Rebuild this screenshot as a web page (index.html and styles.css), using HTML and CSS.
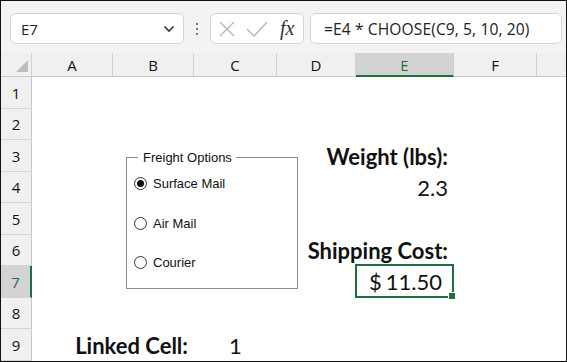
FILE: index.html
```html
<!DOCTYPE html>
<html>
<head>
<meta charset="utf-8">
<link rel="stylesheet" href="styles.css">
</head>
<body>
<div class="app">
  <div class="toolbar">
    <div class="namebox">
      <span class="nb-text">E7</span>
      <svg class="chev" width="12" height="8" viewBox="0 0 12 8"><path d="M1.5 1.5 L6 6 L10.5 1.5" fill="none" stroke="#333" stroke-width="1.6"/></svg>
    </div>
    <div class="dots"><i></i><i></i><i></i></div>
    <div class="fxbox">
      <svg class="xicon" width="16" height="16" viewBox="0 0 16 16"><path d="M1 1 L15 15 M15 1 L1 15" stroke="#b4b4b4" stroke-width="1.3" fill="none"/></svg>
      <svg class="check" width="22" height="16" viewBox="0 0 22 16"><path d="M1 8 L8 15 L21 1" stroke="#b4b4b4" stroke-width="1.3" fill="none"/></svg>
      <span class="fx">fx</span>
    </div>
    <div class="formula">=E4 * CHOOSE(C9, 5, 10, 20)</div>
  </div>
  <div class="sheet">
    <div class="corner"><svg width="12" height="12" viewBox="0 0 12 12"><path d="M12 0 L12 12 L0 12 Z" fill="#bdbdbd"/></svg></div>
    <div class="ch">A</div><div class="ch">B</div><div class="ch">C</div><div class="ch">D</div><div class="ch sel">E</div><div class="ch">F</div><div class="ch last"></div>

    <div class="rh">1</div><div class="row-fill"></div>
    <div class="rh">2</div><div class="row-fill"></div>
    <div class="rh">3</div><div class="c span-ab"></div><div class="c"></div><div class="c lbl r3">Weight (lbs):</div><div class="c rest"></div>
    <div class="rh">4</div><div class="c span-ab"></div><div class="c"></div><div class="c val">2.3</div><div class="c rest"></div>
    <div class="rh">5</div><div class="row-fill"></div>
    <div class="rh">6</div><div class="c span-ab"></div><div class="c"></div><div class="c lbl">Shipping Cost:</div><div class="c rest"></div>
    <div class="rh sel">7</div><div class="c span-ab"></div><div class="c"></div><div class="c active"><span>$</span><span>11.50</span><i class="handle"></i></div><div class="c rest"></div>
    <div class="rh">8</div><div class="row-fill"></div>
    <div class="rh">9</div><div class="c lbl9">Linked Cell:</div><div class="c one">1</div><div class="c rest2"></div>
  </div>

  <fieldset class="group">
    <legend>Freight Options</legend>
    <label class="opt"><span class="radio on"></span>Surface Mail</label>
    <label class="opt"><span class="radio"></span>Air Mail</label>
    <label class="opt"><span class="radio"></span>Courier</label>
  </fieldset>
</div>
</body>
</html>
```

FILE: styles.css
```css
* { box-sizing: border-box; }
html, body { margin: 0; padding: 0; background: #fff; }
.app {
  position: relative;
  width: 567px;
  height: 362px;
  border: 1px solid #111;
  overflow: hidden;
  background: #fff;
  font-family: "Open Sans", "Noto Sans", sans-serif;
}
.toolbar {
  height: 52px;
  background: #f3f3f3;
  display: flex;
  align-items: flex-start;
  padding: 12px 0 0 9px;
}
.namebox {
  width: 174px;
  height: 31px;
  background: #fff;
  border: 1px solid #d6d6d6;
  border-radius: 6px;
  display: flex;
  align-items: center;
  justify-content: space-between;
  padding: 0 8px 0 10px;
  font-size: 15px;
  color: #222;
}
.dots {
  width: 26px;
  height: 31px;
  display: flex;
  flex-direction: column;
  align-items: center;
  justify-content: center;
  gap: 3px;
}
.dots i { display: block; width: 2px; height: 2px; background: #777; }
.fxbox {
  width: 94px;
  height: 31px;
  background: #fff;
  border: 1px solid #d6d6d6;
  border-radius: 6px;
  display: flex;
  align-items: center;
  padding: 0 6px 0 8px;
  gap: 11px;
}
.fx {
  font-family: "Liberation Serif", serif;
  font-style: italic;
  font-size: 20px;
  color: #333;
  margin-left: 1px;
}
.formula {
  margin-left: 6px;
  width: 252px;
  height: 31px;
  background: #fff;
  border: 1px solid #d6d6d6;
  border-radius: 6px;
  padding: 0 0 0 13px;
  display: flex;
  align-items: center;
  font-size: 15.6px;
  letter-spacing: 0.1px;
  color: #222;
  white-space: nowrap;
}
.sheet {
  display: grid;
  grid-template-columns: 31px 81px 81px 83px 79px 98px 83px 1fr;
  grid-template-rows: 24px 32px 31px 32px 31px 32px 31px 32px 31px 32px;
  font-family: "Lato", "Open Sans", sans-serif;
}
.corner {
  background: #f0f0f0;
  border-right: 1px solid #d0d0d0;
  border-bottom: 1px solid #c8c8c8;
  display: flex;
  align-items: flex-end;
  justify-content: flex-end;
  padding: 0 3px 4px 0;
}
.ch {
  background: #f0f0f0;
  border-right: 1px solid #d0d0d0;
  border-bottom: 1px solid #c8c8c8;
  display: flex;
  align-items: center;
  justify-content: center;
  font-family: "Open Sans", sans-serif;
  font-size: 15px;
  color: #111;
  padding-top: 1px;
}
.ch.sel {
  background: #d3d3d3;
  color: #1e6e42;
  border-bottom: 2px solid #1e6e42;
}
.ch.last { border-right: none; }
.rh {
  background: #f0f0f0;
  border-right: 1px solid #c8c8c8;
  border-bottom: 1px solid #d4d4d4;
  display: flex;
  align-items: center;
  justify-content: center;
  font-family: "Open Sans", sans-serif;
  font-size: 15px;
  color: #111;
}
.rh.sel {
  background: #d3d3d3;
  color: #1e6e42;
  border-right: 2px solid #1e6e42;
}
.row-fill { grid-column: 2 / -1; }
.c { display: flex; align-items: center; white-space: nowrap; }
.span-ab { grid-column: 2 / 4; }
.rest { grid-column: 7 / -1; }
.lbl, .val {
  grid-column: 5 / 7;
  justify-content: flex-end;
  padding-right: 6px;
  font-size: 22px;
  color: #111;
}
.lbl { font-weight: 700; }
.active {
  grid-column: 6 / 7;
  position: relative;
  border: 2px solid #1e6e42;
  margin: -2px 0 0 -1px;
  justify-content: space-between;
  padding: 0 10px 0 12px;
  font-size: 22px;
  color: #111;
}
.handle {
  position: absolute;
  right: -4px;
  bottom: -4px;
  width: 6px;
  height: 6px;
  background: #1e6e42;
  border: 1px solid #fff;
  box-sizing: content-box;
}
.lbl9 {
  grid-column: 2 / 4;
  justify-content: flex-end;
  padding-right: 6px;
  font-size: 22px;
  font-weight: 700;
  color: #111;
}
.one {
  grid-column: 4 / 5;
  justify-content: center;
  font-size: 22px;
  color: #111;
}
.rest2 { grid-column: 5 / -1; }

.group {
  position: absolute;
  left: 125px;
  top: 149px;
  width: 172px;
  height: 139px;
  margin: 0;
  border: 1px solid #8c8c8c;
  padding: 2px 0 0 7px;
  font-family: "Liberation Sans", sans-serif;
  font-size: 13px;
  color: #111;
  background: transparent;
}
.group legend {
  padding: 0 4px 0 5px;
  margin-left: 4px;
  font-size: 13px;
}
.opt {
  display: flex;
  align-items: center;
  height: 39.5px;
  gap: 6px;
  margin-top: -3px;
  margin-bottom: 3px;
}
.radio {
  width: 13px;
  height: 13px;
  border: 1px solid #333;
  border-radius: 50%;
  display: flex;
  align-items: center;
  justify-content: center;
  background: #fff;
}
.radio.on::after {
  content: "";
  width: 7px;
  height: 7px;
  border-radius: 50%;
  background: #111;
}
```
